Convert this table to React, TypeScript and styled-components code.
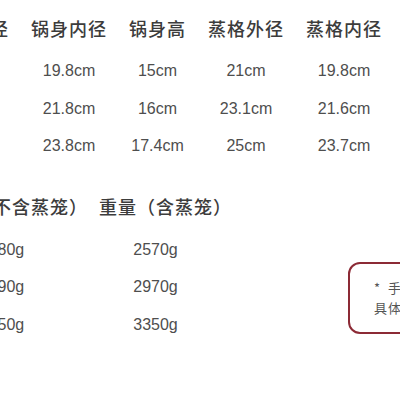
import styled, { createGlobalStyle } from "styled-components";

const GlobalStyle = createGlobalStyle`
  html, body {
    margin: 0;
    padding: 0;
    background: #ffffff;
  }
  body {
    font-family: "Liberation Sans", "Noto Sans CJK SC", sans-serif;
    overflow: hidden;
  }
`;

const sizeCols = ["锅口外径", "锅身内径", "锅身高", "蒸格外径", "蒸格内径", "总高"];
const sizeRows = [
  ["26.4cm", "19.8cm", "15cm", "21cm", "19.8cm", "24cm"],
  ["28.4cm", "21.8cm", "16cm", "23.1cm", "21.6cm", "26cm"],
  ["30.4cm", "23.8cm", "17.4cm", "25cm", "23.7cm", "28cm"],
];

const weightCols = ["重量（不含蒸笼）", "重量（含蒸笼）"];
const weightRows = [
  ["2280g", "2570g"],
  ["2590g", "2970g"],
  ["2850g", "3350g"],
];

function App() {
  return (
    <>
      <GlobalStyle />
      <SCPage>
        <SCSheet>
          <SCTable $cols={sizeCols.length} $gap={22}>
            {sizeCols.map((c) => (
              <SCHeadCell key={c} $below={5}>
                {c}
              </SCHeadCell>
            ))}
            {sizeRows.map((row, i) =>
              row.map((v, j) => (
                <SCDataCell key={`${i}-${j}`} $nudge={0}>
                  {v}
                </SCDataCell>
              ))
            )}
          </SCTable>

          <SCWeightRow>
            <SCTable $cols={weightCols.length} $gap={11}>
              {weightCols.map((c) => (
                <SCHeadCell key={c} $below={6}>
                  {c}
                </SCHeadCell>
              ))}
              {weightRows.map((row, i) =>
                row.map((v, j) => (
                  <SCDataCell key={`${i}-${j}`} $nudge={10}>
                    {v}
                  </SCDataCell>
                ))
              )}
            </SCTable>
            <SCNote>
              <SCNoteLine>
                <SCStar>*</SCStar>手工制作，尺寸存在误差
              </SCNoteLine>
              <SCNoteLine>具体以实物为准</SCNoteLine>
            </SCNote>
          </SCWeightRow>
        </SCSheet>
      </SCPage>
    </>
  );
}

const SCPage = styled.div`
  width: 400px;
  height: 400px;
  overflow: hidden;
  padding-top: 10px;
  box-sizing: border-box;
`;

const SCSheet = styled.div`
  margin-left: -67px;
  display: flex;
  flex-direction: column;
  align-items: flex-start;
  gap: 23px;
  width: max-content;
`;

const SCTable = styled.div<{ $cols: number; $gap: number }>`
  display: grid;
  grid-template-columns: repeat(${(p) => p.$cols}, auto);
  justify-content: start;
  column-gap: ${(p) => p.$gap}px;
`;

const SCHeadCell = styled.div<{ $below: number }>`
  font-family: "Noto Sans CJK SC", sans-serif;
  font-size: 18px;
  font-weight: 500;
  letter-spacing: 1px;
  color: #3c3c3c;
  line-height: 37px;
  padding-bottom: ${(p) => p.$below}px;
  text-align: center;
  white-space: nowrap;
`;

const SCDataCell = styled.div<{ $nudge: number }>`
  font-family: "Liberation Sans", sans-serif;
  font-size: 16px;
  color: #4e4e4e;
  line-height: 37.5px;
  text-align: center;
  white-space: nowrap;
  padding-right: ${(p) => p.$nudge * 2}px;
`;

const SCWeightRow = styled.div`
  display: flex;
  align-items: flex-start;
  margin-left: 3px;
`;

const SCNote = styled.div`
  margin-left: 116px;
  margin-top: 74px;
  border: 2px solid #8c2a35;
  border-radius: 12px;
  padding: 14px 24px 14px 24px;
  font-family: "Noto Sans CJK SC", sans-serif;
  font-size: 13px;
  letter-spacing: 1px;
  color: #555555;
`;

const SCNoteLine = styled.div`
  line-height: 20px;
  white-space: nowrap;
`;

const SCStar = styled.span`
  margin-right: 7px;
`;

export default App;
